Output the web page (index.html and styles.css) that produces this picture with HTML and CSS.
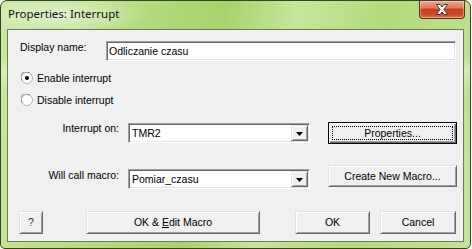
FILE: index.html
```html
<!DOCTYPE html>
<html>
<head>
<meta charset="utf-8">
<link rel="stylesheet" href="styles.css">
</head>
<body>
<div class="window">
  <div class="titlebar">
    <span class="title">Properties: Interrupt</span>
    <div class="close">
      <svg width="14" height="11" viewBox="0 0 14 11">
        <path d="M1.5 0.5 H5 L7 3 L9 0.5 H12.5 L9 5.5 L12.5 10.5 H9 L7 8 L5 10.5 H1.5 L5 5.5 Z" fill="#fff" stroke="#4b3a36" stroke-width="1"/>
      </svg>
    </div>
  </div>
  <div class="client">
    <div class="row-name">
      <span class="lbl-name">Display name:</span>
      <div class="textbox">Odliczanie czasu</div>
    </div>
    <div class="radio-row first">
      <svg class="radio" width="12" height="12" viewBox="0 0 12 12">
        <circle cx="6" cy="6" r="5.5" fill="#fff" stroke="#b4b4b4"/>
        <path d="M1.2 8.5 A5 5 0 0 1 8.5 1.2" fill="none" stroke="#7a7a7a" stroke-width="1"/>
        <circle cx="6" cy="6" r="2" fill="#000"/>
      </svg>
      <span>Enable interrupt</span>
    </div>
    <div class="radio-row second">
      <svg class="radio" width="12" height="12" viewBox="0 0 12 12">
        <circle cx="6" cy="6" r="5.5" fill="#fff" stroke="#b4b4b4"/>
        <path d="M1.2 8.5 A5 5 0 0 1 8.5 1.2" fill="none" stroke="#7a7a7a" stroke-width="1"/>
      </svg>
      <span>Disable interrupt</span>
    </div>
    <div class="field-row row-int">
      <span class="flabel">Interrupt on:</span>
      <div class="combo">
        <span class="combo-text">TMR2</span>
        <span class="combo-btn"><svg width="7" height="4" viewBox="0 0 7 4"><path d="M0 0 H7 L3.5 4 Z" fill="#000"/></svg></span>
      </div>
      <div class="btn btn-default side-btn"><span class="focus">Properties...</span></div>
    </div>
    <div class="field-row row-macro">
      <span class="flabel">Will call macro:</span>
      <div class="combo">
        <span class="combo-text">Pomiar_czasu</span>
        <span class="combo-btn"><svg width="7" height="4" viewBox="0 0 7 4"><path d="M0 0 H7 L3.5 4 Z" fill="#000"/></svg></span>
      </div>
      <div class="btn side-btn"><span>Create New Macro...</span></div>
    </div>
    <div class="bottom-row">
      <div class="btn help"><span>?</span></div>
      <div class="btn edit"><span>OK &amp; <u>E</u>dit Macro</span></div>
      <div class="btn ok"><span>OK</span></div>
      <div class="btn cancel"><span>Cancel</span></div>
    </div>
  </div>
</div>
</body>
</html>
```
FILE: styles.css
```css
body {
  margin: 0;
  background: #ffffff;
}

.window {
  width: 471px;
  height: 249px;
  box-sizing: border-box;
  border: 1px solid #34452b;
  border-radius: 7px 7px 5px 5px;
  padding: 0 6px 6px 6px;
  display: flex;
  flex-direction: column;
  overflow: hidden;
  background:
    radial-gradient(ellipse 90px 22px at 60px 14px, rgba(255,255,255,0.55), rgba(255,255,255,0) 100%),
    linear-gradient(180deg, rgba(255,255,255,0) 55px, rgba(255,255,255,0.35) 70px, rgba(255,255,255,0) 90px),
    linear-gradient(100deg, #c8e8a0 0%, #b7de84 22%, #a7d36c 44%, #c5e69c 58%, #b2da7b 76%, #c3e497 100%);
}

.titlebar {
  height: 28px;
  display: flex;
  align-items: flex-start;
  justify-content: space-between;
}

.title {
  margin-left: 1px;
  margin-top: 5px;
  font-family: "Noto Sans", "Liberation Sans", sans-serif;
  font-size: 11.5px;
  line-height: 15px;
  color: #101010;
}

.close {
  width: 46px;
  height: 18px;
  box-sizing: border-box;
  margin-right: -1px;
  border: 1px solid #5a3024;
  border-top: none;
  border-radius: 0 0 4px 4px;
  background: linear-gradient(180deg, #eba68e 0%, #de7c5f 40%, #c9401b 50%, #cd4a25 80%, #e07a55 100%);
  box-shadow: inset 0 0 0 1px rgba(255,255,255,0.35);
  display: flex;
  align-items: center;
  justify-content: center;
}

.client {
  flex: 1;
  border: 1px solid #667f55;
  background: #f0f0f0;
  display: flex;
  flex-direction: column;
  font-family: "Liberation Sans", Arial, sans-serif;
  font-size: 10.5px;
  line-height: 13px;
  color: #000;
}

.row-name {
  display: flex;
  margin-top: 11px;
  padding-left: 12px;
}

.lbl-name {
  width: 86px;
}

.textbox {
  width: 350px;
  height: 20px;
  box-sizing: border-box;
  border: 1px solid;
  border-color: #a0a0a0 #ffffff #ffffff #a0a0a0;
  box-shadow: inset 1px 1px #696969, inset -1px -1px #e3e3e3;
  background: #fff;
  padding: 1px 0 0 2px;
  line-height: 16px;
}

.radio-row {
  display: flex;
  align-items: center;
  height: 14px;
  padding-left: 13px;
}

.radio-row.first {
  margin-top: 10px;
}

.radio-row.second {
  margin-top: 8px;
}

.radio {
  margin-right: 4px;
  flex: none;
}

.field-row {
  display: flex;
  align-items: flex-start;
}

.row-int {
  margin-top: 15px;
}

.row-macro {
  margin-top: 21px;
}

.flabel {
  width: 111px;
  text-align: right;
}

.row-macro .flabel {
  padding-top: 4px;
}

.combo {
  width: 182px;
  height: 20px;
  box-sizing: border-box;
  margin-left: 9px;
  border: 1px solid;
  border-color: #a0a0a0 #ffffff #ffffff #a0a0a0;
  box-shadow: inset 1px 1px #696969, inset -1px -1px #e3e3e3;
  background: #fff;
  display: flex;
  padding: 1px;
}

.row-int .combo {
  margin-top: 1px;
}

.row-macro .combo {
  margin-top: 4px;
}

.combo-text {
  flex: 1;
  padding-left: 2px;
  line-height: 16px;
}

.combo-btn {
  width: 17px;
  height: 16px;
  box-sizing: border-box;
  background: #f0f0f0;
  border: 1px solid;
  border-color: #e3e3e3 #696969 #696969 #e3e3e3;
  box-shadow: inset 1px 1px #fff, inset -1px -1px #a0a0a0;
  display: flex;
  align-items: center;
  justify-content: center;
  padding-top: 1px;
}

.btn {
  box-sizing: border-box;
  height: 22px;
  background: #f0f0f0;
  border: 1px solid;
  border-color: #e3e3e3 #696969 #696969 #e3e3e3;
  box-shadow: inset 1px 1px #fff, inset -1px -1px #a0a0a0;
  display: flex;
  align-items: center;
  justify-content: center;
}

.side-btn {
  width: 129px;
  margin-left: 18px;
}

.btn-default {
  border: 1px solid #000;
  box-shadow: inset 1px 1px #fff, inset -1px -1px #696969, inset -2px -2px #a0a0a0;
  padding: 3px;
}

.focus {
  flex: 1;
  align-self: stretch;
  border: 1px dotted #000;
  display: flex;
  align-items: center;
  justify-content: center;
}

.bottom-row {
  display: flex;
  margin-top: 22px;
  padding-left: 11px;
}

.bottom-row .btn {
  height: 23px;
}

.help {
  width: 24px;
  color: #1d3a78;
}

.edit {
  width: 174px;
  margin-left: 43px;
}

.ok {
  width: 75px;
  margin-left: 35px;
}

.cancel {
  width: 76px;
  margin-left: 10px;
}
```
